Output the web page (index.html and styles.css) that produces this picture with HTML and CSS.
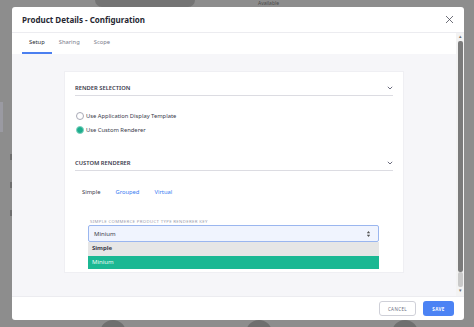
FILE: index.html
```html
<!DOCTYPE html>
<html lang="en">
<head>
    <meta charset="UTF-8">
    <meta name="viewport" content="width=device-width, initial-scale=1.0">
    <title>Product Details - Configuration</title>
    <link rel="stylesheet" href="styles.css">
</head>
<body>
    <div class="page">
        <div class="page-top">
            <div class="page-hero"></div>
            <span class="page-label">Available</span>
        </div>
        <div class="page-middle">
            <div class="page-side">
                <span class="side-block"></span>
                <span class="side-mark"></span>
                <span class="side-mark"></span>
                <span class="side-mark"></span>
            </div>
        </div>
        <div class="page-bottom">
            <span class="page-dot"></span>
            <span class="page-dot"></span>
            <span class="page-dot"></span>
        </div>
    </div>

    <div class="modal">
        <div class="modal-header">
            <h1 class="modal-title">Product Details - Configuration</h1>
            <button class="modal-close" aria-label="Close">
                <svg width="9" height="9" viewBox="0 0 9 9"><path d="M1 1L8 8M8 1L1 8" stroke="#4a4b58" stroke-width="0.8" fill="none"/></svg>
            </button>
        </div>

        <div class="modal-scroll">
            <div class="modal-content">
                <nav class="tabs">
                    <a class="tab active">Setup</a>
                    <a class="tab">Sharing</a>
                    <a class="tab">Scope</a>
                </nav>

                <div class="modal-body">
                    <div class="card">
                        <div class="section-head">
                            <span>RENDER SELECTION</span>
                            <svg width="6" height="4" viewBox="0 0 6 4"><path d="M0.8 0.8L3 3L5.2 0.8" stroke="#6b6c7e" stroke-width="1" fill="none"/></svg>
                        </div>
                        <div class="radios">
                            <label class="radio"><span class="radio-dot"></span>Use Application Display Template</label>
                            <label class="radio"><span class="radio-dot checked"></span>Use Custom Renderer</label>
                        </div>

                        <div class="section-head second">
                            <span>CUSTOM RENDERER</span>
                            <svg width="6" height="4" viewBox="0 0 6 4"><path d="M0.8 0.8L3 3L5.2 0.8" stroke="#6b6c7e" stroke-width="1" fill="none"/></svg>
                        </div>
                        <div class="subtabs">
                            <a class="subtab active">Simple</a>
                            <a class="subtab">Grouped</a>
                            <a class="subtab">Virtual</a>
                        </div>

                        <div class="field">
                            <div class="field-label">SIMPLE COMMERCE PRODUCT TYPE RENDERER KEY</div>
                            <div class="select">
                                <span>Minium</span>
                                <svg width="5" height="8" viewBox="0 0 5 8"><path d="M0.8 3.2L2.5 1L4.2 3.2Z M0.8 4.8L2.5 7L4.2 4.8Z" fill="#555"/></svg>
                            </div>
                            <ul class="options">
                                <li class="option">Simple</li>
                                <li class="option selected">Minium</li>
                            </ul>
                        </div>
                    </div>
                </div>
            </div>

            <div class="scrollbar">
                <span class="scroll-arrow">&#9652;</span>
                <span class="scroll-thumb"></span>
                <span class="scroll-rest"></span>
                <span class="scroll-arrow">&#9662;</span>
            </div>
        </div>

        <div class="modal-footer">
            <button class="btn btn-cancel">CANCEL</button>
            <button class="btn btn-save">SAVE</button>
        </div>
    </div>
</body>
</html>
```

FILE: styles.css
```css
body {
    margin: 0;
    font-family: "Noto Sans", Arial, sans-serif;
    background-color: #8d8d8d;
    color: #393a4a;
    overflow: hidden;
}
.page {
    height: 327px;
    display: flex;
    flex-direction: column;
    overflow: hidden;
}
.page-top {
    height: 7px;
    display: flex;
    align-items: flex-start;
}
.page-hero {
    width: 100px;
    height: 7px;
    margin-left: 95px;
    background-color: #747474;
    border-radius: 0 0 10px 10px;
}
.page-label {
    margin-left: 63px;
    font-size: 5px;
    color: #4a4a4a;
}
.page-middle {
    flex: 1;
    min-height: 0;
}
.page-side {
    width: 12px;
    padding-top: 95px;
    display: flex;
    flex-direction: column;
    gap: 22px;
}
.side-block {
    width: 3px;
    height: 30px;
    background-color: #9a9aa2;
}
.side-mark {
    width: 2px;
    height: 6px;
    margin-left: 10px;
    background-color: #6e6e6e;
}
.page-bottom {
    height: 7px;
    flex-shrink: 0;
    display: flex;
    gap: 120px;
    padding-left: 100px;
    overflow: hidden;
}
.page-dot {
    flex-shrink: 0;
    width: 26px;
    height: 26px;
    border-radius: 50%;
    background-color: #6f6f6f;
}

/* modal */
.modal {
    position: absolute;
    top: 7px;
    left: 12px;
    width: 452px;
    height: 313px;
    background-color: white;
    border-radius: 3px;
    display: flex;
    flex-direction: column;
    overflow: hidden;
}
.modal-header {
    height: 25px;
    border-bottom: 1px solid #ececf0;
    display: flex;
    align-items: center;
    justify-content: space-between;
    padding: 0 9px 0 10px;
}
.modal-title {
    margin: 0;
    font-size: 8px;
    font-weight: 700;
    color: #272833;
}
.modal-close {
    background: none;
    border: none;
    padding: 0;
    width: 12px;
    height: 12px;
    display: flex;
    align-items: center;
    justify-content: center;
}
.modal-scroll {
    flex: 1;
    display: flex;
    min-height: 0;
}
.modal-content {
    flex: 1;
    display: flex;
    flex-direction: column;
}
.tabs {
    height: 21px;
    display: flex;
    padding-left: 10px;
    background-color: white;
}
.tab {
    padding: 0 7px;
    font-size: 5.8px;
    line-height: 19px;
    color: #7a7b8c;
    border-bottom: 2px solid transparent;
}
.tab.active {
    color: #272833;
    border-bottom-color: #4b7ff0;
}
.modal-body {
    flex: 1;
    background-color: #f6f6f9;
    padding: 17px 52px 0 52px;
}
.card {
    background-color: white;
    border: 1px solid #efeff3;
    height: 202px;
    box-sizing: border-box;
    padding: 9px 10px 0 10px;
}
.section-head {
    height: 14px;
    border-bottom: 1px solid #dcdce2;
    display: flex;
    align-items: center;
    justify-content: space-between;
    font-size: 5.8px;
    font-weight: 600;
    color: #393a4a;
    padding-right: 0;
}
.section-head.second {
    margin-top: 19px;
}
.radios {
    margin-top: 13px;
    display: flex;
    flex-direction: column;
}
.radio {
    height: 14px;
    display: flex;
    align-items: center;
    font-size: 5.8px;
    color: #393a4a;
}
.radio-dot {
    width: 6px;
    height: 6px;
    border: 1px solid #a8a9b6;
    border-radius: 50%;
    margin: 0 2px 0 1px;
    background-color: white;
}
.radio-dot.checked {
    background-color: #1dad8d;
    border-color: #7fd2bf;
}
.subtabs {
    margin-top: 14px;
    height: 14px;
    display: flex;
    align-items: center;
    padding-left: 7px;
    gap: 15px;
    font-size: 5.8px;
}
.subtab {
    color: #3a7cf2;
}
.subtab.active {
    color: #393a4a;
}
.field {
    margin: 18px 14px 0 13px;
}
.field-label {
    height: 8px;
    font-size: 4.3px;
    letter-spacing: 0.35px;
    color: #9a9bac;
    line-height: 8px;
    padding-left: 2px;
}
.select {
    height: 17px;
    box-sizing: border-box;
    border: 1px solid #9ab6ef;
    border-radius: 2px;
    background-color: #f0f4fe;
    display: flex;
    align-items: center;
    justify-content: space-between;
    padding: 0 7px 0 5px;
    font-size: 6px;
    color: #393a4a;
}
.options {
    list-style: none;
    margin: 0;
    padding: 0;
}
.option {
    height: 13.5px;
    line-height: 13.5px;
    padding-left: 4px;
    font-size: 6px;
    font-weight: 700;
    color: #393a4a;
    background-color: #e6e6e6;
}
.option.selected {
    font-weight: 400;
    color: #e9fbf6;
    background-color: #1bb893;
}
.scrollbar {
    width: 8px;
    display: flex;
    flex-direction: column;
    align-items: center;
    padding-bottom: 3px;
    background-color: #f3f3f3;
}
.scroll-arrow {
    height: 6px;
    font-size: 5px;
    line-height: 6px;
    color: #6d6d6d;
}
.scroll-thumb {
    width: 5px;
    height: 231px;
    margin-top: 2px;
    border-radius: 2px;
    background-color: #7b7b7b;
}
.scroll-rest {
    width: 5px;
    flex: 1;
    border-radius: 2px;
    background-color: #c9c9c9;
}
.modal-footer {
    height: 23px;
    border-top: 1px solid #ececf0;
    display: flex;
    align-items: center;
    justify-content: flex-end;
    gap: 7px;
    padding-right: 10px;
}
.btn {
    height: 15px;
    border-radius: 3px;
    font-family: "Noto Sans", Arial, sans-serif;
    font-size: 4.5px;
    letter-spacing: 0.4px;
    padding: 0;
    cursor: pointer;
}
.btn-cancel {
    width: 37px;
    background-color: white;
    border: 1px solid #cfd0d8;
    color: #6b6c7e;
}
.btn-save {
    width: 31px;
    background-color: #4c83f4;
    border: none;
    color: white;
    font-weight: 700;
}
```
